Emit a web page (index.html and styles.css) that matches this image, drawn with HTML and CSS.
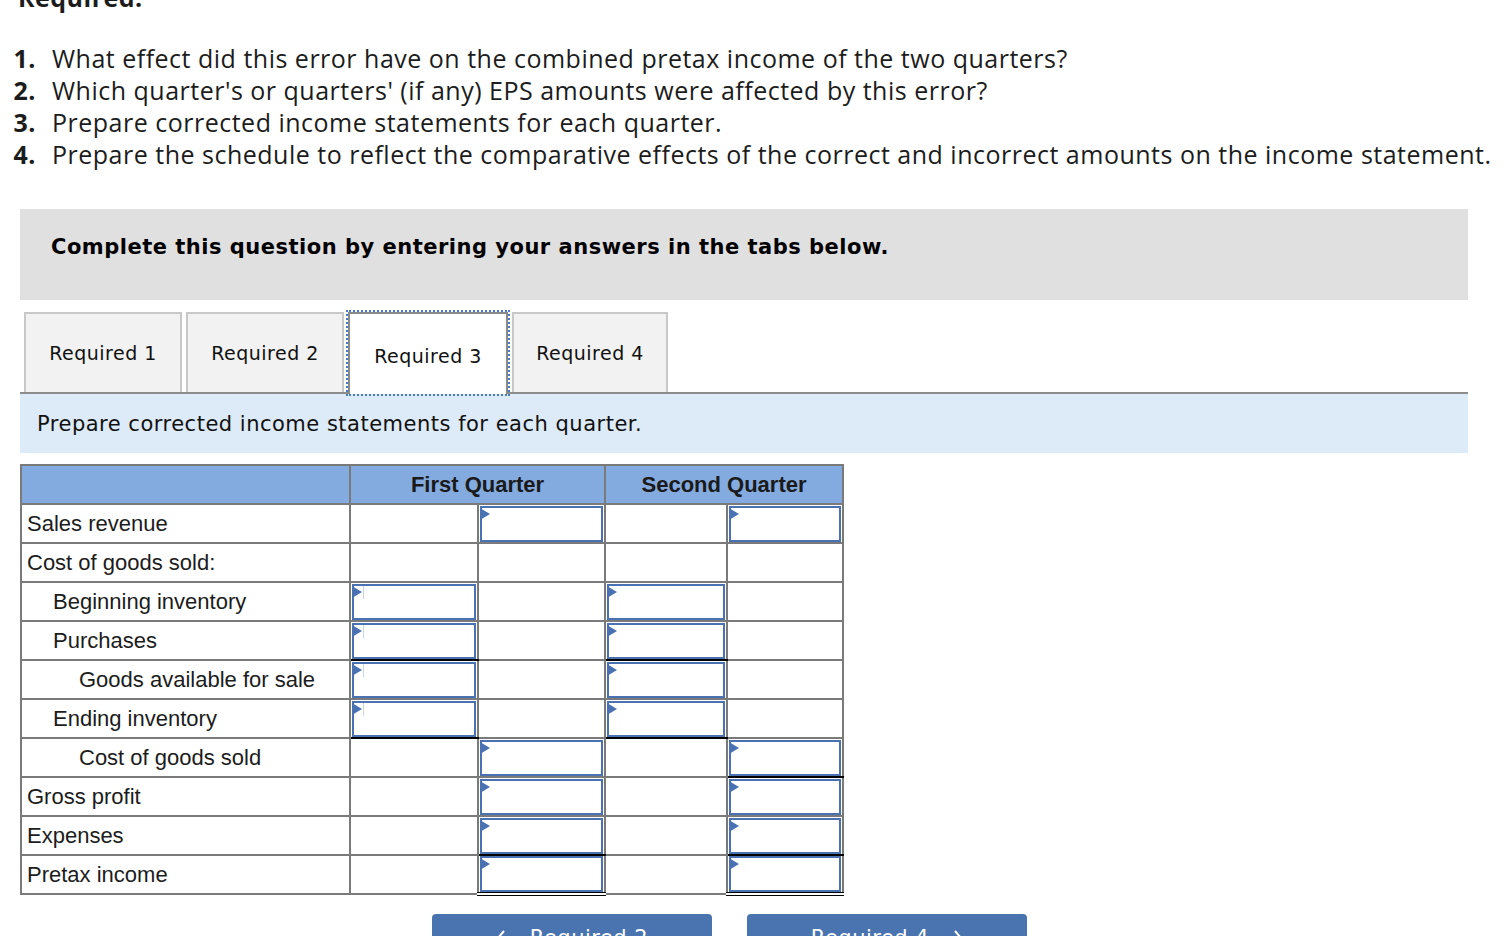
FILE: index.html
```html
<!DOCTYPE html>
<html lang="en">
<head>
<meta charset="utf-8">
<title>Required</title>
<link rel="stylesheet" href="styles.css">
</head>
<body>
<div class="page">
  <h3 class="req-title">Required:</h3>
  <ol class="reqs">
    <li><span class="num">1.</span><span class="txt">What effect did this error have on the combined pretax income of the two quarters?</span></li>
    <li><span class="num">2.</span><span class="txt">Which quarter's or quarters' (if any) EPS amounts were affected by this error?</span></li>
    <li><span class="num">3.</span><span class="txt">Prepare corrected income statements for each quarter.</span></li>
    <li><span class="num">4.</span><span class="txt">Prepare the schedule to reflect the comparative effects of the correct and incorrect amounts on the income statement.</span></li>
  </ol>

  <div class="banner">Complete this question by entering your answers in the tabs below.</div>

  <div class="tabs">
    <div class="tab">Required 1</div>
    <div class="tab">Required 2</div>
    <div class="tab active">Required 3</div>
    <div class="tab last">Required 4</div>
  </div>

  <div class="instr">Prepare corrected income statements for each quarter.</div>

  <table class="stmt">
    <colgroup>
      <col class="c-label">
      <col class="c-fq1">
      <col class="c-fq2">
      <col class="c-sq1">
      <col class="c-sq2">
    </colgroup>
    <thead>
      <tr>
        <th></th>
        <th colspan="2">First Quarter</th>
        <th colspan="2">Second Quarter</th>
      </tr>
    </thead>
    <tbody>
      <tr>
        <td class="lbl">Sales revenue</td>
        <td></td>
        <td class="in"><div class="inp"></div></td>
        <td></td>
        <td class="in"><div class="inp"></div></td>
      </tr>
      <tr>
        <td class="lbl">Cost of goods sold:</td>
        <td></td><td></td><td></td><td></td>
      </tr>
      <tr>
        <td class="lbl lv2">Beginning inventory</td>
        <td class="in"><div class="inp caret"></div></td>
        <td></td>
        <td class="in"><div class="inp"></div></td>
        <td></td>
      </tr>
      <tr>
        <td class="lbl lv2">Purchases</td>
        <td class="in ul"><div class="inp caret"></div></td>
        <td></td>
        <td class="in ul"><div class="inp"></div></td>
        <td></td>
      </tr>
      <tr>
        <td class="lbl lv3">Goods available for sale</td>
        <td class="in"><div class="inp caret"></div></td>
        <td></td>
        <td class="in"><div class="inp"></div></td>
        <td></td>
      </tr>
      <tr>
        <td class="lbl lv2">Ending inventory</td>
        <td class="in ul"><div class="inp caret"></div></td>
        <td></td>
        <td class="in ul"><div class="inp"></div></td>
        <td></td>
      </tr>
      <tr>
        <td class="lbl lv3">Cost of goods sold</td>
        <td></td>
        <td class="in"><div class="inp"></div></td>
        <td></td>
        <td class="in ul"><div class="inp"></div></td>
      </tr>
      <tr>
        <td class="lbl">Gross profit</td>
        <td></td>
        <td class="in"><div class="inp"></div></td>
        <td></td>
        <td class="in"><div class="inp"></div></td>
      </tr>
      <tr>
        <td class="lbl">Expenses</td>
        <td></td>
        <td class="in ul"><div class="inp"></div></td>
        <td></td>
        <td class="in ul"><div class="inp"></div></td>
      </tr>
      <tr>
        <td class="lbl">Pretax income</td>
        <td></td>
        <td class="in dul"><div class="inp"></div></td>
        <td></td>
        <td class="in dul"><div class="inp"></div></td>
      </tr>
    </tbody>
  </table>

  <div class="nav">
    <button class="navbtn" type="button"><svg class="chev" viewBox="0 0 10 18" width="10" height="18"><polyline points="8,2 2,9 8,16" fill="none" stroke="#fff" stroke-width="2"/></svg><span>Required 2</span></button>
    <button class="navbtn" type="button"><span>Required 4</span><svg class="chev" viewBox="0 0 10 18" width="10" height="18"><polyline points="2,2 8,9 2,16" fill="none" stroke="#fff" stroke-width="2"/></svg></button>
  </div>
</div>
</body>
</html>
```

FILE: styles.css
```css
html, body {
  margin: 0;
  padding: 0;
  background: #ffffff;
}

.page {
  display: flow-root;
  width: 1504px;
}

.req-title {
  margin: -19px 0 29px 18px;
  font-family: "Open Sans", Lato, sans-serif;
  font-weight: 700;
  font-size: 25px;
  letter-spacing: 0.5px;
  line-height: 32px;
  color: #1c1c1c;
}

.reqs {
  list-style: none;
  margin: 0 0 39px 0;
  padding: 0;
  font-family: "Open Sans", Lato, sans-serif;
  font-size: 25px;
  letter-spacing: 0.5px;
  line-height: 32px;
  color: #1c1c1c;
}

.reqs li {
  display: grid;
  grid-template-columns: 36px 1fr;
  column-gap: 16px;
  white-space: nowrap;
}

.reqs .num {
  font-weight: 700;
  text-align: right;
}

.banner {
  box-sizing: border-box;
  margin-left: 20px;
  width: 1448px;
  height: 91px;
  padding: 26px 31px 0;
  background: #e0e0e0;
  font-family: "DejaVu Sans", Verdana, sans-serif;
  font-weight: 700;
  font-size: 21px;
  letter-spacing: 0.5px;
  line-height: 24px;
  color: #000;
}

.tabs {
  box-sizing: border-box;
  margin: 12px 0 0 20px;
  width: 1448px;
  height: 82px;
  padding-left: 4px;
  display: flex;
  align-items: flex-start;
  gap: 4px;
  border-bottom: 2px solid #8c8c8c;
}

.tab {
  box-sizing: border-box;
  width: 158px;
  height: 80px;
  display: flex;
  align-items: center;
  justify-content: center;
  background: #f2f2f2;
  border: 2px solid #c8c8c8;
  border-bottom: none;
  font-family: "DejaVu Sans", Verdana, sans-serif;
  font-size: 19px;
  letter-spacing: 0.5px;
  color: #111;
}

.tab.active {
  width: 160px;
  height: 82px;
  padding-top: 4px;
  background: #ffffff;
  border-color: #8a8a8a;
  outline: 2px dotted #4a7cc6;
  outline-offset: 0;
  position: relative;
  z-index: 1;
}

.tab.last {
  width: 156px;
}

.instr {
  box-sizing: border-box;
  margin-left: 20px;
  width: 1448px;
  height: 59px;
  padding-left: 17px;
  display: flex;
  align-items: center;
  background: #ddeaf7;
  font-family: "DejaVu Sans", Verdana, sans-serif;
  font-size: 21px;
  letter-spacing: 0.5px;
  color: #111;
}

.stmt {
  margin: 11px 0 0 20px;
  width: 824px;
  table-layout: fixed;
  border-collapse: collapse;
  border: 2px solid #7a7a7a;
  font-family: "Liberation Sans", Arial, sans-serif;
  font-size: 22px;
  color: #1c1c1c;
}

.c-label { width: 329px; }
.c-fq1 { width: 128px; }
.c-fq2 { width: 127px; }
.c-sq1 { width: 122px; }
.c-sq2 { width: 116px; }

.stmt th,
.stmt td {
  border: 2px solid #7a7a7a;
  height: 37px;
  padding: 0;
  box-sizing: border-box;
}

.stmt th {
  background: #84abdf;
  font-weight: 700;
  text-align: center;
  color: #1a1a1a;
}

.stmt tr {
  height: 39px;
}

.stmt td.lbl {
  padding: 0 5px;
  white-space: nowrap;
}

.stmt td.lv2 { padding-left: 31px; }
.stmt td.lv3 { padding-left: 57px; }

.stmt td.in {
  padding: 0 1px;
  vertical-align: middle;
}

.stmt td.ul { border-bottom: 2px solid #000; }
.stmt td.dul { border-bottom: 4px double #000; }

.inp {
  position: relative;
  box-sizing: border-box;
  height: 36px;
  border: 2px solid #4a72b2;
  background: #fff;
}

.inp::before {
  content: "";
  position: absolute;
  left: -2px;
  top: 0;
  width: 0;
  height: 0;
  border-left: 10px solid #4a72b2;
  border-top: 6px solid transparent;
  border-bottom: 6px solid transparent;
}

.inp.caret::after {
  content: "";
  position: absolute;
  left: 9px;
  top: 0;
  width: 1px;
  height: 13px;
  background: #c9d6ea;
}

.nav {
  display: flex;
  gap: 35px;
  margin: 18px 0 0 432px;
}

.navbtn {
  box-sizing: border-box;
  width: 280px;
  height: 48px;
  padding: 12px 0 0;
  display: flex;
  align-items: flex-start;
  justify-content: center;
  gap: 24px;
  background: #4a74b0;
  border: none;
  border-radius: 4px;
  color: #fff;
  font-family: "DejaVu Sans", Verdana, sans-serif;
  font-size: 21px;
  letter-spacing: 0.5px;
  line-height: 24px;
}

.chev {
  margin-top: 3px;
}
```
